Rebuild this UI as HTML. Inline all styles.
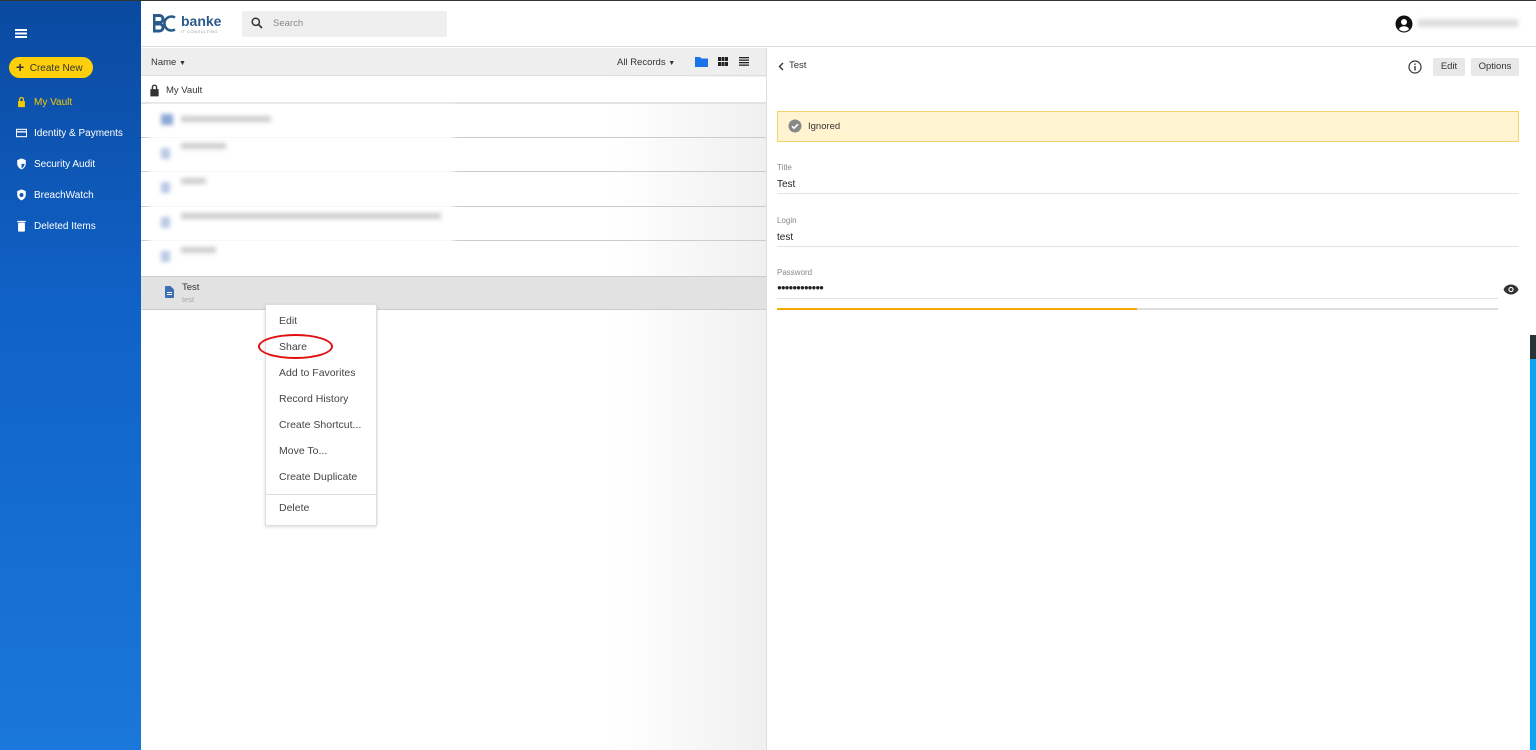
<!DOCTYPE html>
<html><head><meta charset="utf-8"><style>
*{box-sizing:border-box;margin:0;padding:0}
body{width:1536px;height:750px;overflow:hidden;font-family:"Liberation Sans",sans-serif;background:#fff;position:relative;color:#333}
.abs{position:absolute}
#top{left:0;top:0;width:1536px;height:1px;background:#333}
#side{left:0;top:1px;width:141px;height:749px;background:linear-gradient(180deg,#0a4aa0 0%,#1061c6 40%,#1a78da 100%)}
.nav{position:absolute;left:16px;font-size:10px;color:#fff;display:flex;align-items:center;gap:7px}
.nav svg{width:11px;height:12px}
#hdr{left:141px;top:1px;width:1395px;height:46px;background:#fff;border-bottom:1px solid #ddd}
#list{left:141px;top:48px;width:626px;height:702px;background:linear-gradient(90deg,#fff 0%,#fff 75%,#f0f0f0 100%);border-right:1px solid #ddd}
.row{position:absolute;left:0;width:625px;border-bottom:1px solid #ccc}
.menu{left:265px;top:304px;width:112px;height:222px;background:#fff;border:1px solid #ddd;box-shadow:0 1px 3px rgba(0,0,0,.15);border-radius:2px}
.mi{position:absolute;left:13px;font-size:10.5px;color:#444}
.lbl{position:absolute;left:777px;font-size:8px;color:#888}
.val{position:absolute;left:777px;font-size:10px;color:#222}
.ln{position:absolute;left:777px;height:1px;background:#e3e3e3}
.btn{position:absolute;top:58px;height:18px;background:#e8e8e8;font-size:9.5px;color:#333;text-align:center;line-height:18px;border-radius:2px}
</style></head><body>
<div id="top" class="abs"></div>
<div id="side" class="abs">
  <div class="abs" style="left:15px;top:28px;width:12px;height:1.5px;background:#fff;box-shadow:0 3.5px 0 #fff,0 7px 0 #fff"></div>
  <div class="abs" style="left:9px;top:56px;width:84px;height:21px;border-radius:11px;background:#fdd00b;font-size:10px;color:#333;line-height:21px;padding-left:7px"><b style="font-size:14px;vertical-align:-1px">+</b>&nbsp; Create New</div>
  <div class="nav" style="top:95px;color:#f5c800"><svg viewBox="0 0 12 14"><path d="M3 6V4a3 3 0 016 0v2h1v7H2V6zM4.5 6h3V4a1.5 1.5 0 00-3 0z" fill="#f5c800"/></svg>My Vault</div>
  <div class="nav" style="top:126px"><svg viewBox="0 0 12 12"><rect x="0.5" y="2" width="11" height="8" fill="none" stroke="#fff" stroke-width="1.2"/><rect x="0.5" y="4" width="11" height="1.5" fill="#fff"/></svg>Identity &amp; Payments</div>
  <div class="nav" style="top:157px"><svg viewBox="0 0 12 14"><path d="M6 0.5L1 2.5v4c0 3 2.2 5.8 5 6.7 2.8-.9 5-3.7 5-6.7v-4z" fill="#fff"/><path d="M6 2v10c1.8-.7 3.5-2.8 3.5-5.2H6V2z" fill="#1058b8"/></svg>Security Audit</div>
  <div class="nav" style="top:188px"><svg viewBox="0 0 12 14"><path d="M6 0.5L1 2.5v4c0 3 2.2 5.8 5 6.7 2.8-.9 5-3.7 5-6.7v-4z" fill="#fff"/><circle cx="6" cy="7" r="2.3" fill="#1058b8"/></svg>BreachWatch</div>
  <div class="nav" style="top:219px"><svg viewBox="0 0 12 14"><rect x="2" y="3" width="8" height="10.5" rx="1" fill="#fff"/><rect x="1" y="1" width="10" height="1.5" fill="#fff"/></svg>Deleted Items</div>
</div>
<div id="hdr" class="abs">
  <svg class="abs" style="left:12px;top:13px" width="24" height="19" viewBox="0 0 24 19"><path d="M1 1.5h5.5a3.5 3.5 0 010 7H1zM1 10h5.5a3.5 3.5 0 010 7H1z" fill="none" stroke="#2a5a8a" stroke-width="3"/><path d="M22 3.5A7 7 0 1022 15.5" fill="none" stroke="#2a5a8a" stroke-width="2.5"/></svg>
  <div class="abs" style="left:40px;top:12px;font-size:14px;color:#2a5a8a;font-weight:bold">banke</div>
  <div class="abs" style="left:40px;top:28px;font-size:4px;color:#999;letter-spacing:.5px">IT CONSULTING</div>
  <div class="abs" style="left:101px;top:10px;width:205px;height:26px;background:#efefef;border-radius:2px"></div>
  <svg class="abs" style="left:110px;top:16px" width="12" height="12" viewBox="0 0 12 12"><circle cx="4.8" cy="4.8" r="3.6" fill="none" stroke="#333" stroke-width="1.5"/><path d="M7.5 7.5L11 11" stroke="#333" stroke-width="1.6"/></svg>
  <div class="abs" style="left:132px;top:17px;font-size:9.5px;color:#888">Search</div>
  <svg class="abs" style="left:1254px;top:14px" width="18" height="18" viewBox="0 0 18 18"><circle cx="9" cy="9" r="8.5" fill="#111"/><circle cx="9" cy="7" r="3" fill="#fff"/><path d="M3.8 14c1.3-2 3-2.8 5.2-2.8s3.9.8 5.2 2.8A7 7 0 013.8 14z" fill="#fff"/></svg>
  <div class="abs" style="left:1277px;top:18px;width:100px;height:8px;background:#ddd;filter:blur(2px)"></div>
</div>
<div id="list" class="abs">
  <div class="abs" style="left:0;top:0;width:625px;height:28px;background:#eee;border-bottom:1px solid #ddd"></div>
  <div class="abs" style="left:10px;top:9px;font-size:9.5px;color:#333">Name <span style="font-size:7px">▼</span></div>
  <div class="abs" style="left:476px;top:9px;font-size:9.5px;color:#333">All Records <span style="font-size:7px">▼</span></div>
  <svg class="abs" style="left:554px;top:8px" width="13" height="11" viewBox="0 0 13 11"><path d="M0 1h5l1.5 1.5H13V11H0z" fill="#1a73e8"/></svg>
  <svg class="abs" style="left:577px;top:9px" width="10" height="9" viewBox="0 0 10 9"><g fill="#222"><rect x="0" y="0" width="3" height="4"/><rect x="3.5" y="0" width="3" height="4"/><rect x="7" y="0" width="3" height="4"/><rect x="0" y="5" width="3" height="4"/><rect x="3.5" y="5" width="3" height="4"/><rect x="7" y="5" width="3" height="4"/></g></svg>
  <svg class="abs" style="left:598px;top:9px" width="10" height="9" viewBox="0 0 10 9"><g fill="#222"><rect y="0" width="10" height="1.3"/><rect y="2.5" width="10" height="1.3"/><rect y="5" width="10" height="1.3"/><rect y="7.5" width="10" height="1.3"/></g></svg>
  <div class="abs" style="left:0;top:29px;width:625px;height:27px;background:#fff;border-bottom:2px solid #e3e3e3"></div>
  <svg class="abs" style="left:8px;top:35px" width="11" height="14" viewBox="0 0 12 14"><path d="M3 6V4a3 3 0 016 0v2h1.5v8h-9V6zM4.5 6h3V4a1.5 1.5 0 00-3 0z" fill="#333"/></svg>
  <div class="abs" style="left:25px;top:37px;font-size:9.5px;color:#333">My Vault</div>
  <div class="row" style="top:57px;height:33px"></div>
  <div class="row" style="top:90px;height:34px"></div>
  <div class="row" style="top:124px;height:35px"></div>
  <div class="row" style="top:159px;height:34px"></div>
  <div class="row" style="top:193px;height:35px;border:none"></div>
  <div class="abs" style="left:8px;top:57px;width:305px;height:170px;background:rgba(255,255,255,.85);filter:blur(3px)"></div>
  <div class="abs" style="left:20px;top:66px;width:12px;height:11px;background:#8aa7d6;filter:blur(2px)"></div>
  <div class="abs" style="left:40px;top:68px;width:90px;height:6px;background:#ccc;filter:blur(2.5px)"></div>
  <div class="abs" style="left:20px;top:100px;width:9px;height:11px;background:#b9c9e5;filter:blur(2px)"></div>
  <div class="abs" style="left:40px;top:95px;width:45px;height:6px;background:#ccc;filter:blur(2.5px)"></div>
  <div class="abs" style="left:20px;top:134px;width:9px;height:11px;background:#b9c9e5;filter:blur(2px)"></div>
  <div class="abs" style="left:40px;top:130px;width:25px;height:6px;background:#ccc;filter:blur(2.5px)"></div>
  <div class="abs" style="left:20px;top:169px;width:9px;height:11px;background:#b9c9e5;filter:blur(2px)"></div>
  <div class="abs" style="left:40px;top:165px;width:260px;height:6px;background:#ccc;filter:blur(2.5px)"></div>
  <div class="abs" style="left:20px;top:203px;width:9px;height:11px;background:#b9c9e5;filter:blur(2px)"></div>
  <div class="abs" style="left:40px;top:199px;width:35px;height:6px;background:#ccc;filter:blur(2.5px)"></div>
  <div class="abs" style="left:0;top:228px;width:625px;height:34px;background:#e2e2e2;border-top:1px solid #ccc;border-bottom:1px solid #ccc"></div>
  <svg class="abs" style="left:24px;top:238px" width="9" height="12" viewBox="0 0 9 12"><path d="M0 1a1 1 0 011-1h4.5L9 3.5V11a1 1 0 01-1 1H1a1 1 0 01-1-1z" fill="#3d6fb8"/><rect x="2" y="6" width="5" height="1" fill="#fff"/><rect x="2" y="8" width="5" height="1" fill="#fff"/></svg>
  <div class="abs" style="left:41px;top:234px;font-size:9.5px;color:#333">Test</div>
  <div class="abs" style="left:41px;top:247px;font-size:7.5px;color:#aaa">test</div>
</div>
<div class="menu abs">
  <div class="mi" style="top:10px">Edit</div>
  <div class="mi" style="top:36px">Share</div>
  <div class="mi" style="top:62px">Add to Favorites</div>
  <div class="mi" style="top:88px">Record History</div>
  <div class="mi" style="top:114px">Create Shortcut...</div>
  <div class="mi" style="top:140px">Move To...</div>
  <div class="mi" style="top:166px">Create Duplicate</div>
  <div class="abs" style="left:0;top:189px;width:110px;height:1px;background:#ddd"></div>
  <div class="mi" style="top:197px">Delete</div>
</div>
<div class="abs" style="left:258px;top:334px;width:75px;height:25px;border:2px solid #e01010;border-radius:50%"></div>
<svg class="abs" style="left:778px;top:62px" width="6" height="9" viewBox="0 0 6 9"><path d="M5 1L1.5 4.5 5 8" fill="none" stroke="#333" stroke-width="1.4"/></svg>
<div class="abs" style="left:789px;top:60px;font-size:9.5px;color:#333">Test</div>
<svg class="abs" style="left:1408px;top:60px" width="14" height="14" viewBox="0 0 14 14"><circle cx="7" cy="7" r="6" fill="none" stroke="#333" stroke-width="1.2"/><rect x="6.3" y="6" width="1.4" height="4.5" fill="#333"/><rect x="6.3" y="3.5" width="1.4" height="1.4" fill="#333"/></svg>
<div class="btn" style="left:1433px;width:32px">Edit</div>
<div class="btn" style="left:1471px;width:48px">Options</div>
<div class="abs" style="left:777px;top:111px;width:742px;height:31px;background:#fff3d0;border:1px solid #f5d26a"></div>
<svg class="abs" style="left:788px;top:119px" width="14" height="14" viewBox="0 0 14 14"><circle cx="7" cy="7" r="6.5" fill="#888"/><path d="M4 7.2l2 2 4-4" fill="none" stroke="#fff" stroke-width="1.6"/></svg>
<div class="abs" style="left:808px;top:121px;font-size:9.5px;color:#333">Ignored</div>
<div class="lbl" style="top:163px">Title</div>
<div class="val" style="top:179px">Test</div>
<div class="ln" style="top:193px;width:742px"></div>
<div class="lbl" style="top:216px">Login</div>
<div class="val" style="top:232px">test</div>
<div class="ln" style="top:246px;width:742px"></div>
<div class="lbl" style="top:268px">Password</div>
<div class="val" style="top:283px;font-size:8px;letter-spacing:-1px">●●●●●●●●●●●●</div>
<div class="ln" style="top:298px;width:721px"></div>
<div class="abs" style="left:777px;top:308px;width:721px;height:2px;background:#ddd"></div>
<div class="abs" style="left:777px;top:308px;width:360px;height:2px;background:#f5a800"></div>
<svg class="abs" style="left:1503px;top:284px" width="16" height="11" viewBox="0 0 16 11"><path d="M8 0.5C4.5 0.5 1.6 2.7.5 5.5c1.1 2.8 4 5 7.5 5s6.4-2.2 7.5-5C14.4 2.7 11.5.5 8 .5z" fill="#333"/><circle cx="8" cy="5.5" r="2.6" fill="#fff"/><circle cx="8" cy="5.5" r="1.5" fill="#333"/></svg>
<div class="abs" style="left:1530px;top:335px;width:6px;height:24px;background:#263238"></div>
<div class="abs" style="left:1530px;top:359px;width:6px;height:391px;background:#0aa5f5"></div>
</body></html>
